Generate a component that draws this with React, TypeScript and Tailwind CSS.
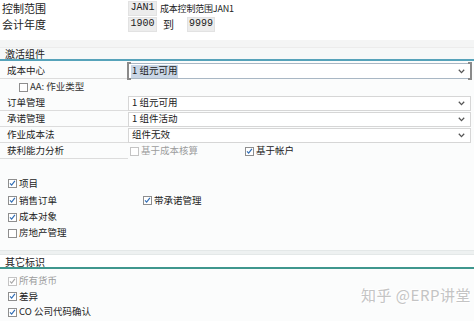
import React from "react";

function Check({ checked, disabled }: { checked?: boolean; disabled?: boolean }) {
  return (
    <span
      className={
        "inline-flex w-[9px] h-[9px] shrink-0 items-center justify-center border bg-white " +
        (disabled ? "border-[#c4c4c4]" : "border-[#8e8e8e]")
      }
    >
      {checked && (
        <svg width="9" height="9" viewBox="0 0 9 9">
          <path
            d="M1.3 4.3 L3.4 6.6 L7.6 1.2"
            fill="none"
            stroke={disabled ? "#a8a8a8" : "#2f6db5"}
            strokeWidth="1.5"
          />
        </svg>
      )}
    </span>
  );
}

function Chevron() {
  return (
    <svg width="7" height="5" viewBox="0 0 7 5" className="shrink-0">
      <path d="M0.8 0.8 L3.5 3.6 L6.2 0.8" fill="none" stroke="#555" strokeWidth="1.3" />
    </svg>
  );
}

function Select({ text, focused }: { text: string; focused?: boolean }) {
  return (
    <div
      className={
        "relative flex-1 flex items-center justify-between bg-white pr-[5px] " +
        (focused ? "h-[16px] border border-[#a9b7c4]" : "h-[15px] border border-[#d6d6d6]")
      }
    >
      {focused ? (
        <span className="ml-[2px] px-[1px] h-[13px] flex items-center bg-[#c9d6e6]">{text}</span>
      ) : (
        <span className="ml-[3px]">{text}</span>
      )}
      <Chevron />
      {focused && (
        <>
          <span className="absolute left-[-2px] top-[-2px] w-[4px] h-[18px] border-l-2 border-t-2 border-b-2 border-[#8a8a8a]" />
          <span className="absolute right-[-2px] top-[-2px] w-[4px] h-[18px] border-r-2 border-t-2 border-b-2 border-[#8a8a8a]" />
        </>
      )}
    </div>
  );
}

function SelectRow({ label, text, focused }: { label: string; text: string; focused?: boolean }) {
  return (
    <div className="flex items-center h-[16px] pr-[3px]">
      <div className="w-[128px] h-full flex items-center pl-[7px] border-b border-[#dcdcdc]">{label}</div>
      <Select text={text} focused={focused} />
    </div>
  );
}

function CheckItem({ label, checked, disabled }: { label: string; checked?: boolean; disabled?: boolean }) {
  return (
    <div className={"flex items-center gap-[2px] " + (disabled ? "text-[#9c9c9c]" : "")}>
      <Check checked={checked} disabled={disabled} />
      <span>{label}</span>
    </div>
  );
}

export default function App() {
  return (
    <div className="relative w-[474px] h-[321px] overflow-hidden bg-[#fbfcfc] text-[#222] font-['Noto_Sans_CJK_SC','Liberation_Sans',sans-serif] leading-none">
      {/* top */}
      <div className="bg-white">
        <div className="flex items-center h-[16px] text-[11px]">
          <div className="w-[128px] pl-[2px]">控制范围</div>
          <div className="w-[29px] h-[15px] flex items-center justify-center bg-[#ececec] border border-[#e2e2e2] font-['Liberation_Mono',monospace] text-[10px]">
            JAN1
          </div>
          <div className="ml-[3px] text-[9px] tracking-[-0.2px]">成本控制范围JAN1</div>
        </div>
        <div className="flex items-center h-[16px] text-[11px]">
          <div className="w-[128px] pl-[2px]">会计年度</div>
          <div className="w-[29px] h-[15px] flex items-center justify-center bg-[#ececec] border border-[#e2e2e2] font-['Liberation_Mono',monospace] text-[10px]">
            1900
          </div>
          <div className="w-[30px] pl-[6px]">到</div>
          <div className="w-[28px] h-[15px] flex items-center justify-center bg-[#ececec] border border-[#e2e2e2] font-['Liberation_Mono',monospace] text-[10px]">
            9999
          </div>
        </div>
        <div className="h-[8px]" />
      </div>
      <div className="h-[8px] bg-[#f4f5f5] border-b border-[#ececec]" />

      {/* 激活组件 */}
      <div className="text-[9.5px]">
        <div className="h-[11px] flex items-center pl-[5px] bg-[#f6f8f8] text-[10px]">激活组件</div>
        <div className="h-[2px] bg-[#56a3ba]" />
        <div className="h-[2px]" />
        <SelectRow label="成本中心" text="1 组元可用" focused />
        <div className="flex items-center h-[16px] pl-[19px] gap-[2px]">
          <Check />
          <span className="text-[#333]">AA: 作业类型</span>
        </div>
        <SelectRow label="订单管理" text="1 组元可用" />
        <SelectRow label="承诺管理" text="1 组件活动" />
        <SelectRow label="作业成本法" text="组件无效" />
        <div className="flex items-center h-[16px]">
          <div className="w-[128px] h-full flex items-center pl-[7px] border-b border-[#dcdcdc]">获利能力分析</div>
          <div className="w-[117px] pl-[2px]">
            <CheckItem label="基于成本核算" disabled />
          </div>
          <CheckItem label="基于帐户" checked />
        </div>
        <div className="h-[16px]" />
        <div className="pl-[8px] flex flex-col">
          <div className="h-[17px] flex items-center">
            <CheckItem label="项目" checked />
          </div>
          <div className="h-[17px] flex items-center">
            <div className="w-[135px]">
              <CheckItem label="销售订单" checked />
            </div>
            <CheckItem label="带承诺管理" checked />
          </div>
          <div className="h-[16px] flex items-center">
            <CheckItem label="成本对象" checked />
          </div>
          <div className="h-[16px] flex items-center">
            <CheckItem label="房地产管理" />
          </div>
        </div>
        <div className="h-[9px]" />
        <div className="h-[5px] bg-[#eef1f1] border-y border-[#e4e8e8]" />

        {/* 其它标识 */}
        <div className="h-[12px] flex items-end pl-[5px] bg-white text-[10px]">其它标识</div>
        <div className="h-[2px] bg-[#3f978e]" />
        <div className="h-[4px]" />
        <div className="pl-[8px] flex flex-col">
          <div className="h-[16px] flex items-center">
            <CheckItem label="所有货币" checked disabled />
          </div>
          <div className="h-[15px] flex items-center">
            <CheckItem label="差异" checked />
          </div>
          <div className="h-[16px] flex items-center">
            <CheckItem label="CO 公司代码确认" checked />
          </div>
        </div>
      </div>

      {/* watermark */}
      <div className="absolute left-[361px] top-[287px] text-[15px] text-[#c4c4c4] [text-shadow:0_0_1px_#fff,1px_1px_0_#fff,-1px_-1px_0_#fff] tracking-[0.5px]">
        知乎 @ERP讲堂
      </div>
    </div>
  );
}
